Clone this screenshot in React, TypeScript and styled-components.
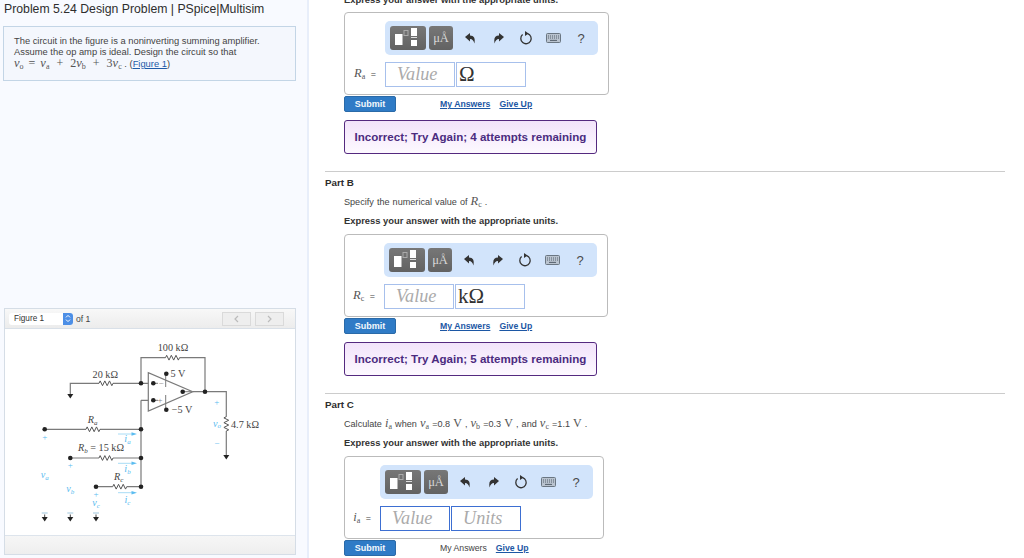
import React from "react";
import styled, { createGlobalStyle } from "styled-components";

const Global = createGlobalStyle`
  html, body { margin: 0; padding: 0; background: #fff; }
  body { font-family: "Liberation Sans", Arial, sans-serif; color: #333; }
  #root { width: 1024px; height: 558px; overflow: hidden; }
`;

const Page = styled.div`
  display: flex;
  width: 1024px;
  height: 558px;
  overflow: hidden;
`;

const LeftPanel = styled.aside`
  flex: 0 0 308px;
  box-sizing: border-box;
  height: 558px;
  background: #f8faff;
  border-right: 2px solid #e8eefa;
  padding: 0 11px 0 3px;
`;

const Title = styled.h1`
  margin: 0;
  padding-left: 1px;
  height: 26px;
  line-height: 18px;
  font-size: 12.25px;
  font-weight: 400;
  color: #2e2e2e;
  white-space: nowrap;
`;

const Intro = styled.div`
  box-sizing: border-box;
  height: 55px;
  background: #f4f7fd;
  border: 1px solid #c3d5e6;
  padding: 9px 10px;
  font-size: 9.35px;
  line-height: 11px;
  color: #444;
  white-space: nowrap;
`;

const MathVar = styled.i`
  font-family: "Liberation Serif", serif;
  font-size: 12.5px;
  line-height: 10px;
  color: #555;
`;

const MathNum = styled.span<{ $gap?: number }>`
  font-family: "Liberation Serif", serif;
  font-size: 12px;
  line-height: 10px;
  color: #555;
  margin: 0 ${(p) => p.$gap ?? 0}px;
`;

const Sub = styled.sub`
  font-family: "Liberation Serif", serif;
  font-size: 8px;
  line-height: 0;
  vertical-align: -2px;
  color: #555;
`;

const FigureLink = styled.a`
  color: #1f5ba8;
  text-decoration: underline;
`;

const FigurePanel = styled.section`
  box-sizing: border-box;
  margin: 227px 0 0 1px;
  width: 292px;
  height: 247px;
  border: 1px solid #d5dde6;
  display: flex;
  flex-direction: column;
`;

const FigureBar = styled.div`
  flex: 0 0 20px;
  box-sizing: border-box;
  display: flex;
  align-items: center;
  padding: 0 11px 0 4px;
  background: linear-gradient(#f8f8f8, #ececec);
  border-bottom: 1px solid #d9e0e8;
`;

const FigureSelect = styled.div`
  display: flex;
  align-items: stretch;
  width: 64px;
  height: 12px;
  background: #fff;
  border-radius: 3px;
  font-size: 8.2px;
  line-height: 12px;
  color: #333;
  padding-left: 5px;
  box-sizing: border-box;
  justify-content: space-between;
`;

const Spinner = styled.span`
  flex: 0 0 10px;
  background: #4d8fe6;
  border-radius: 0 3px 3px 0;
  display: flex;
  align-items: center;
  justify-content: center;
`;

const OfText = styled.span`
  font-size: 8.6px;
  margin-left: 3px;
  color: #444;
`;

const Pager = styled.div`
  margin-left: auto;
  display: flex;
  gap: 4px;
`;

const PagerButton = styled.span`
  width: 29px;
  height: 14px;
  box-sizing: border-box;
  border: 1px solid #dadada;
  background: #eee;
  color: #bbb;
  display: flex;
  align-items: center;
  justify-content: center;
`;

const FigureBody = styled.div`
  flex: 1;
  background: #fff;
  min-height: 0;
`;

const Diagram = styled.svg`
  display: block;
`;

const FigureFoot = styled.div`
  flex: 0 0 18px;
  background: linear-gradient(#f6f6f6, #eeeeee);
  border-top: 1px solid #dde4ec;
`;

const RightPanel = styled.main`
  flex: 1;
  min-width: 0;
  padding: 0 19px 0 16px;
`;

const PartBody = styled.div`
  margin-left: 19px;
`;

const Prompt = styled.p`
  margin: 7px 0 0;
  height: 12px;
  line-height: 12px;
  font-size: 9.1px;
  word-spacing: 0.55px;
  color: #444;
  white-space: nowrap;
`;

const Instruction = styled.p<{ $cut?: boolean }>`
  margin: ${(p) => (p.$cut ? "-6px 0 6px" : "7px 0 7px")};
  height: 12px;
  line-height: 12px;
  font-size: 9.4px;
  font-weight: 700;
  color: #333;
  white-space: nowrap;
`;

const PartSection = styled.section`
  border-top: 1px solid #ccc;
  margin-top: 17px;
  padding-top: 5px;
`;

const PartTitle = styled.h2`
  margin: 0;
  height: 12px;
  line-height: 12px;
  font-size: 9.8px;
  font-weight: 700;
  color: #2c2c2c;
`;

const AnswerBox = styled.div<{ $width: number; $inset: number }>`
  box-sizing: border-box;
  width: ${(p) => p.$width}px;
  height: 83px;
  padding: 8px 0 0 ${(p) => p.$inset}px;
  border: 1px solid #bbb;
  border-radius: 4px;
`;

const Tools = styled.div`
  box-sizing: border-box;
  display: flex;
  align-items: center;
  width: 213px;
  height: 34px;
  padding-left: 5px;
  background: #d2e4fb;
  border-radius: 5px;
`;

const DarkButton = styled.span<{ $w: number; $after: number }>`
  box-sizing: border-box;
  flex: 0 0 ${(p) => p.$w}px;
  height: 24px;
  margin-right: ${(p) => p.$after}px;
  border-radius: 3px;
  background: linear-gradient(#777, #626262);
  display: flex;
  align-items: center;
  justify-content: center;
  color: #d8d8d8;
`;

const Units = styled.span`
  font-family: "Liberation Serif", serif;
  font-size: 12.5px;
  line-height: 24px;
`;

const ToolSlot = styled.span`
  flex: 0 0 27.6px;
  display: flex;
  align-items: center;
  justify-content: center;
  color: #333;
`;

const Help = styled.span`
  font-size: 13px;
  color: #4a4a4a;
`;

const InputRow = styled.div<{ $inset: number }>`
  display: flex;
  margin: 7px 0 0 ${(p) => -p.$inset}px;
`;

const InputLabel = styled.label<{ $inset: number }>`
  flex: 0 0 ${(p) => p.$inset - 9}px;
  margin-right: 9px;
  text-align: right;
  font-size: 9px;
  word-spacing: 3px;
  line-height: 24px;
  color: #444;
  white-space: nowrap;
`;

const Field = styled.span<{ $focus?: boolean; $filled?: boolean }>`
  box-sizing: border-box;
  width: 70px;
  height: 25px;
  margin-right: 1px;
  padding-left: ${(p) => (p.$filled ? 2 : 11)}px;
  border: ${(p) => (p.$focus ? "1px solid #3d6fd2" : "1px solid #a7c0ec")};
  background: #fff;
  font-family: "Liberation Serif", serif;
  font-size: ${(p) => (p.$filled ? 21 : 18.2)}px;
  font-style: ${(p) => (p.$filled ? "normal" : "italic")};
  color: ${(p) => (p.$filled ? "#333" : "#aaa")};
  line-height: 22px;
`;

const ActionRow = styled.div`
  display: flex;
  align-items: center;
  margin-top: 1px;
  height: 16px;
`;

const SubmitButton = styled.button`
  box-sizing: border-box;
  width: 52px;
  height: 16px;
  padding: 0;
  border: 1px solid #2a6aa8;
  border-radius: 2px;
  background: #2f7bc6;
  color: #f4f8fc;
  font-family: "Liberation Sans", Arial, sans-serif;
  font-size: 9px;
  font-weight: 700;
`;

const ActionLink = styled.a<{ $muted?: boolean; $gap: number }>`
  margin-left: ${(p) => p.$gap}px;
  font-size: 8.7px;
  font-weight: ${(p) => (p.$muted ? 400 : 700)};
  color: ${(p) => (p.$muted ? "#444" : "#1c57a4")};
  text-decoration: ${(p) => (p.$muted ? "none" : "underline")};
  white-space: nowrap;
`;

const Feedback = styled.div`
  box-sizing: border-box;
  width: 253px;
  height: 34px;
  margin-top: 8px;
  border: 1px solid #54297f;
  border-radius: 3px;
  background: linear-gradient(#f2e3fa, #fdf9ff);
  color: #4b2b7f;
  font-size: 11.55px;
  font-weight: 700;
  line-height: 32px;
  text-align: center;
  white-space: nowrap;
`;

const FlipWrap = styled.span`
  display: flex;
  transform: scaleX(-1);
`;

const Undo = () => (
  <svg width="13" height="13" viewBox="0 0 13 13">
    <path d="M1 5 L6 1 V3.6 C10 3.6 11.5 6.5 10.4 11.5 C9.6 8.6 8.4 7 6 7 V9.4 Z" fill="#333" />
  </svg>
);

const Reset = () => (
  <svg width="14" height="14" viewBox="0 0 14 14">
    <path d="M8.6 2.6 A5.2 5.2 0 1 1 3.6 3.6" fill="none" stroke="#333" strokeWidth="1.3" />
    <path d="M6 0 L9.6 2.6 L6 5 Z" fill="#333" />
  </svg>
);

const Keyboard = () => (
  <svg width="15" height="10" viewBox="0 0 15 10">
    <rect x="0.5" y="0.5" width="14" height="9" rx="1" fill="#b9c3cf" stroke="#6a7682" />
    <path d="M2 3 H13 M2 5 H13" stroke="#54606c" strokeWidth="1" strokeDasharray="1 1" />
    <path d="M4 7.4 H11" stroke="#54606c" strokeWidth="1" />
  </svg>
);

const TemplateIcon = () => (
  <svg width="36" height="24" viewBox="0 0 36 24">
    <rect x="5" y="8" width="7.5" height="11" fill="#fff" />
    <rect x="14" y="4.5" width="4" height="5" fill="none" stroke="#aaa" />
    <rect x="21" y="2" width="6" height="8" fill="#fff" />
    <rect x="21" y="11" width="6" height="1" fill="#ddd" />
    <rect x="21" y="14" width="6" height="6" fill="#fff" />
  </svg>
);

const AnswerBlock = ({
  width, inset, label, sub, unit, focus,
}: { width: number; inset: number; label: string; sub: string; unit?: string; focus?: boolean }) => (
  <AnswerBox $width={width} $inset={inset}>
    <Tools>
      <DarkButton $w={36} $after={3}><TemplateIcon /></DarkButton>
      <DarkButton $w={24} $after={4}><Units>μÅ</Units></DarkButton>
      <ToolSlot><Undo /></ToolSlot>
      <ToolSlot><FlipWrap><Undo /></FlipWrap></ToolSlot>
      <ToolSlot><Reset /></ToolSlot>
      <ToolSlot><Keyboard /></ToolSlot>
      <ToolSlot><Help>?</Help></ToolSlot>
    </Tools>
    <InputRow $inset={inset}>
      <InputLabel $inset={inset}>
        <MathVar>{label}</MathVar><Sub>{sub}</Sub> =
      </InputLabel>
      <Field $focus={focus}>Value</Field>
      {unit ? <Field $filled>{unit}</Field> : <Field $focus={focus}>Units</Field>}
    </InputRow>
  </AnswerBox>
);

const Actions = ({ muted }: { muted?: boolean }) => (
  <ActionRow>
    <SubmitButton>Submit</SubmitButton>
    <ActionLink $gap={44} $muted={muted}>My Answers</ActionLink>
    <ActionLink $gap={9}>Give Up</ActionLink>
  </ActionRow>
);

const WIRE = "#7a7a7a";
const BLUE = "#5bbcf0";
const zig = (x: number, y: number, len: number, vertical = false) => {
  const n = 6;
  const s = len / n;
  let d = `M${x} ${y}`;
  for (let i = 0; i < n; i++) {
    const a = i % 2 ? 2.4 : -2.4;
    d += vertical
      ? ` L${x + a} ${y + s * (i + 0.5)}`
      : ` L${x + s * (i + 0.5)} ${y + a}`;
  }
  d += vertical ? ` L${x} ${y + len}` : ` L${x + len} ${y}`;
  return d;
};

const wires = [
  "M141 383.3 V357.7 H165.5 M179.5 357.7 H205 V391.7",
  "M70.3 394 V383.3 H99 M113 383.3 H153.3",
  "M141 400.3 H153.3 M141 400.3 V486.7",
  "M192.7 391.7 H226.3 V416.7 M226.3 431 V455",
  "M44.7 429.3 H86 M100 429.3 H141",
  "M70.3 458 H99 M113 458 H141",
  "M96 486.7 H112.7 M126.7 486.7 H141",
];
const dots: [number, number][] = [
  [141, 383.3], [153.3, 383.3], [153.3, 400.3], [182.7, 391.7], [166.3, 373.7], [166.3, 409.7],
  [205, 391.7], [141, 429.3], [44.7, 429.3], [70.3, 458], [141, 458], [96, 486.7], [141, 486.7],
];
const serif = "'Liberation Serif', serif";

const Lbl = ({ x, y, c = "#444", size = 10.2, children, italic }: any) => (
  <text x={x} y={y} textAnchor="middle" fontFamily={serif} fontSize={size} fill={c} fontStyle={italic ? "italic" : "normal"}>
    {children}
  </text>
);
const S = ({ children }: any) => <tspan fontSize="7" dy="1.5" fontStyle="italic">{children}</tspan>;

const Circuit = () => (
  <Diagram width="290" height="206" viewBox="5 329 290 206">
    {wires.map((d) => <path key={d} d={d} fill="none" stroke={WIRE} strokeWidth="1.2" />)}
    <path d="M148.3 372.7 V411 L192.7 391.7 Z" fill="#fff" stroke={WIRE} strokeWidth="1.2" />
    <path d="M153.3 383.3 H158 M153.3 400.3 H158 M182.7 391.7 H192 M165.7 375 V387 M165.7 395 V408" stroke={WIRE} strokeWidth="1" fill="none" />
    <path d={zig(165.5, 357.7, 14)} fill="none" stroke="#555" strokeWidth="1" />
    <path d={zig(99, 383.3, 14)} fill="none" stroke="#555" strokeWidth="1" />
    <path d={zig(86, 429.3, 14)} fill="none" stroke="#555" strokeWidth="1" />
    <path d={zig(99, 458, 14)} fill="none" stroke="#555" strokeWidth="1" />
    <path d={zig(112.7, 486.7, 14)} fill="none" stroke="#555" strokeWidth="1" />
    <path d={zig(226.3, 416.7, 14.3, true)} fill="none" stroke="#555" strokeWidth="1" />
    {dots.map(([x, y]) => <circle key={`${x}-${y}`} cx={x} cy={y} r="2.3" fill="#222" />)}
    {[[70.3, 394], [226.3, 455]].map(([x, y]) => (
      <path key={x} d={`M${x - 3} ${y} H${x + 3} L${x} ${y + 4.5} Z`} fill="#222" />
    ))}
    {[44.7, 70.3, 96].map((x) => (
      <g key={x}>
        <path d={`M${x - 3} 513 H${x + 3}`} stroke="#9fc6dc" strokeWidth="1" />
        <path d={`M${x} 514.5 V517`} stroke="#444" strokeWidth="1" />
        <path d={`M${x - 3} 517 H${x + 3} L${x} 521.5 Z`} fill="#222" />
      </g>
    ))}
    <Lbl x={173} y={350.5}>100 kΩ</Lbl>
    <Lbl x={105.3} y={378}>20 kΩ</Lbl>
    <Lbl x={178} y={376.5}>5 V</Lbl>
    <Lbl x={182} y={412.5}>−5 V</Lbl>
    <Lbl x={245} y={427.5}>4.7 kΩ</Lbl>
    <Lbl x={92.7} y={423} italic>R<S>a</S></Lbl>
    <Lbl x={101} y={451}><tspan fontStyle="italic">R</tspan><S>b</S><tspan dy="-1.5"> = 15 kΩ</tspan></Lbl>
    <Lbl x={118.7} y={480} italic>R<S>c</S></Lbl>
    <Lbl x={161} y={386} c="#888" size={9}>−</Lbl>
    <Lbl x={160} y={403} c="#888" size={9}>+</Lbl>
    {[[44.7, 439.5], [70.3, 468], [96, 497], [216.7, 405]].map(([x, y]) => (
      <Lbl key={x} x={x} y={y} c={BLUE} size={9}>+</Lbl>
    ))}
    <Lbl x={216.7} y={446} c={BLUE} size={9}>−</Lbl>
    <Lbl x={44.7} y={478} c={BLUE} italic>v<S>a</S></Lbl>
    <Lbl x={70.3} y={492} c={BLUE} italic>v<S>b</S></Lbl>
    <Lbl x={96} y={506} c={BLUE} italic>v<S>c</S></Lbl>
    <Lbl x={217} y={426.5} c={BLUE} italic>v<S>o</S></Lbl>
    <Lbl x={127.5} y={442} c={BLUE} italic>i<S>a</S></Lbl>
    <Lbl x={127.5} y={472} c={BLUE} italic>i<S>b</S></Lbl>
    <Lbl x={127.5} y={503} c={BLUE} italic>i<S>c</S></Lbl>
    {[434, 463.3, 492.7].map((y) => (
      <g key={y}>
        <path d={`M118 ${y} H133`} stroke="#a8dcf6" strokeWidth="1" />
        <path d={`M131.5 ${y - 1.8} L137 ${y} L131.5 ${y + 1.8} Z`} fill={BLUE} />
      </g>
    ))}
  </Diagram>
);

export default function App() {
  return (
    <Page>
      <Global />
      <LeftPanel>
        <Title>Problem 5.24 Design Problem | PSpice|Multisim</Title>
        <Intro>
          The circuit in the figure is a noninverting summing amplifier.<br />
          Assume the op amp is ideal. Design the circuit so that<br />
          <MathVar>v</MathVar><Sub>o</Sub><MathNum $gap={5}>=</MathNum><MathVar>v</MathVar><Sub>a</Sub>
          <MathNum $gap={7}>+</MathNum><MathNum>2</MathNum><MathVar>v</MathVar><Sub>b</Sub>
          <MathNum $gap={7}>+</MathNum><MathNum>3</MathNum><MathVar>v</MathVar><Sub>c</Sub> . (<FigureLink>Figure 1</FigureLink>)
        </Intro>
        <FigurePanel>
          <FigureBar>
            <FigureSelect>
              Figure 1
              <Spinner>
                <svg width="6" height="9" viewBox="0 0 6 9">
                  <path d="M1 3.4 L3 1.4 L5 3.4 M1 5.6 L3 7.6 L5 5.6" fill="none" stroke="#fff" strokeWidth="1" />
                </svg>
              </Spinner>
            </FigureSelect>
            <OfText>of 1</OfText>
            <Pager>
              <PagerButton>
                <svg width="5" height="8" viewBox="0 0 5 8"><path d="M4 1 L1 4 L4 7" fill="none" stroke="#bbb" strokeWidth="1.2" /></svg>
              </PagerButton>
              <PagerButton>
                <svg width="5" height="8" viewBox="0 0 5 8"><path d="M1 1 L4 4 L1 7" fill="none" stroke="#bbb" strokeWidth="1.2" /></svg>
              </PagerButton>
            </Pager>
          </FigureBar>
          <FigureBody><Circuit /></FigureBody>
          <FigureFoot />
        </FigurePanel>
      </LeftPanel>
      <RightPanel>
        <PartBody>
          <Instruction $cut>Express your answer with the appropriate units.</Instruction>
          <AnswerBlock width={265} inset={40} label="R" sub="a" unit="Ω" />
          <Actions />
          <Feedback>Incorrect; Try Again; 4 attempts remaining</Feedback>
        </PartBody>
        <PartSection>
          <PartTitle>Part B</PartTitle>
          <PartBody>
            <Prompt>Specify the numerical value of <MathVar>R</MathVar><Sub>c</Sub> .</Prompt>
            <Instruction>Express your answer with the appropriate units.</Instruction>
            <AnswerBlock width={264} inset={39} label="R" sub="c" unit="kΩ" />
            <Actions />
            <Feedback>Incorrect; Try Again; 5 attempts remaining</Feedback>
          </PartBody>
        </PartSection>
        <PartSection>
          <PartTitle>Part C</PartTitle>
          <PartBody>
            <Prompt>
              Calculate <MathVar>i</MathVar><Sub>a</Sub> when <MathVar>v</MathVar><Sub>a</Sub> =0.8 <MathNum>V</MathNum> , <MathVar>v</MathVar><Sub>b</Sub> =0.3 <MathNum>V</MathNum> , and <MathVar>v</MathVar><Sub>c</Sub> =1.1 <MathNum>V</MathNum> .
            </Prompt>
            <Instruction>Express your answer with the appropriate units.</Instruction>
            <AnswerBlock width={260} inset={35} label="i" sub="a" focus />
            <Actions muted />
          </PartBody>
        </PartSection>
      </RightPanel>
    </Page>
  );
}
